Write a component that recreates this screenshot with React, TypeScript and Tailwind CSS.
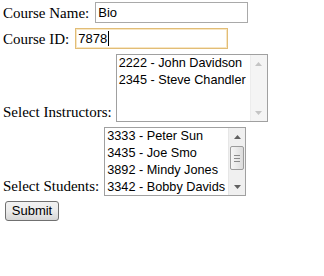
import React from "react";

const serif = { fontFamily: '"Liberation Serif", "Times New Roman", serif' };
const sans = { fontFamily: '"Liberation Sans", Arial, sans-serif' };

function Arrow({ up, color }: { up: boolean; color: string }) {
  return (
    <svg width="7" height="4" viewBox="0 0 7 4">
      {up ? (
        <polygon points="0,4 7,4 3.5,0" fill={color} />
      ) : (
        <polygon points="0,0 7,0 3.5,4" fill={color} />
      )}
    </svg>
  );
}

function DisabledScrollbar() {
  return (
    <div className="w-[17px] h-full flex flex-col justify-between bg-[#f4f4f4] border-l border-[#ececec]">
      <div className="h-[17px] flex items-center justify-center">
        <Arrow up color="#c4c4c4" />
      </div>
      <div className="h-[17px] flex items-center justify-center">
        <Arrow up={false} color="#c4c4c4" />
      </div>
    </div>
  );
}

function ActiveScrollbar() {
  return (
    <div className="w-[17px] h-full flex flex-col bg-[#f0f0f0] border-l border-[#e6e6e6]">
      <div className="h-[17px] flex items-center justify-center shrink-0">
        <Arrow up color="#606060" />
      </div>
      <div className="flex-1 relative">
        <div className="absolute left-[1px] right-[1px] top-[1px] h-[24px] rounded-[2px] border border-[#9c9c9c] bg-gradient-to-r from-[#f6f6f6] to-[#dcdcdc] flex flex-col items-center justify-center gap-[2px]">
          <div className="w-[6px] h-[1px] bg-[#8a8a8a]" />
          <div className="w-[6px] h-[1px] bg-[#8a8a8a]" />
          <div className="w-[6px] h-[1px] bg-[#8a8a8a]" />
        </div>
      </div>
      <div className="h-[17px] flex items-center justify-center shrink-0">
        <Arrow up={false} color="#606060" />
      </div>
    </div>
  );
}

export default function App() {
  return (
    <div className="bg-white w-[324px] h-[276px] text-black" style={serif}>
      <div className="flex flex-col gap-[5px] pt-[2px] pl-[3px]">
        <div className="flex items-center gap-[6px]">
          <span className="text-[15px] leading-[18px]">Course Name:</span>
          <div
            className="w-[153px] h-[21px] border border-[#a9a9a9] bg-white pl-[2px] flex items-center text-[13px]"
            style={sans}
          >
            Bio
          </div>
        </div>
        <div className="flex items-center gap-[6px]">
          <span className="text-[15px] leading-[18px]">Course ID:</span>
          <div
            className="w-[153px] h-[21px] border border-[#e2bd76] shadow-[inset_0_0_0_1px_#f7e6c4] bg-white pl-[2px] flex items-center text-[13px]"
            style={sans}
          >
            7878
            <span className="inline-block w-[1px] h-[15px] bg-black ml-[1px]" />
          </div>
        </div>
        <div className="flex items-end gap-[4px]">
          <span className="text-[15px] leading-[18px] pb-[1px]">Select Instructors:</span>
          <div className="w-[152px] h-[68px] border border-[#a0a0a0] bg-white flex">
            <div className="flex-1 pl-[2px] text-[12.7px] leading-[17px] whitespace-nowrap overflow-hidden" style={sans}>
              <div>2222 - John Davidson</div>
              <div>2345 - Steve Chandler</div>
            </div>
            <DisabledScrollbar />
          </div>
        </div>
        <div className="flex items-end gap-[5px]">
          <span className="text-[15px] leading-[18px] pb-[1px]">Select Students:</span>
          <div className="w-[142px] h-[69px] border border-[#a0a0a0] bg-white flex">
            <div
              className="flex-1 pl-[2px] text-[12.7px] leading-[17px] overflow-hidden whitespace-nowrap"
              style={sans}
            >
              <div>3333 - Peter Sun</div>
              <div>3435 - Joe Smo</div>
              <div>3892 - Mindy Jones</div>
              <div>3342 - Bobby Davids</div>
            </div>
            <ActiveScrollbar />
          </div>
        </div>
        <div className="flex pl-[2px]">
          <button
            className="w-[54px] h-[20px] rounded-[3px] border border-[#707070] bg-gradient-to-b from-[#f2f2f2] via-[#ebebeb] to-[#d6d6d6] text-[13px] leading-[16px] text-black"
            style={sans}
          >
            Submit
          </button>
        </div>
      </div>
    </div>
  );
}
